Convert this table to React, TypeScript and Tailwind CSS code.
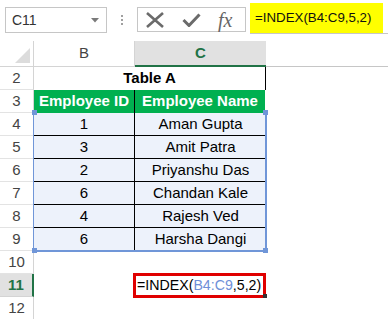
const people = [
  { id: 1, name: "Aman Gupta" },
  { id: 3, name: "Amit Patra" },
  { id: 2, name: "Priyanshu Das" },
  { id: 6, name: "Chandan Kale" },
  { id: 4, name: "Rajesh Ved" },
  { id: 6, name: "Harsha Dangi" },
];

function RowNum({ n, active }: { n: number; active?: boolean }) {
  if (active) {
    return (
      <div className="flex h-full w-[34px] shrink-0 items-center justify-center border-r-2 border-b border-r-[#217346] border-b-[#d4d4d4] bg-[#e1e1e1] text-[15px] font-bold text-[#217346]">
        {n}
      </div>
    );
  }
  return (
    <div className="flex h-full w-[34px] shrink-0 items-center justify-center border-r border-b border-r-[#d4d4d4] border-b-[#e3e3e3] text-[15px] text-[#444]">
      {n}
    </div>
  );
}

export default function App() {
  return (
    <div className="h-[319px] w-[388px] overflow-hidden bg-white font-['Liberation_Sans',Arial,sans-serif] text-black">
      {/* formula bar */}
      <div className="flex h-[41px] items-start">
        <div className="ml-[5px] mt-[7px] flex h-[26px] w-[102px] items-center justify-between border border-[#c6c6c6] pl-[6px] pr-[7px]">
          <span className="text-[14px] text-[#333]">C11</span>
          <svg width="8" height="5" viewBox="0 0 8 5">
            <path d="M0 0h8L4 4.5z" fill="#7a7a7a" />
          </svg>
        </div>
        <div className="ml-[14px] mt-[15px] flex flex-col gap-[2px]">
          <span className="h-[2px] w-[2px] bg-[#a0a0a0]" />
          <span className="h-[2px] w-[2px] bg-[#a0a0a0]" />
          <span className="h-[2px] w-[2px] bg-[#a0a0a0]" />
        </div>
        <div className="ml-[14px] mt-[7px] flex h-[25px] w-[109px] items-center border border-[#c6c6c6]">
          <svg className="ml-[7px]" width="20" height="16" viewBox="0 0 20 16">
            <path d="M2 1l16 14M18 1L2 15" stroke="#6b6b6b" strokeWidth="2.6" />
          </svg>
          <svg className="ml-[17px]" width="19" height="14" viewBox="0 0 19 14">
            <path d="M1.5 7l5.5 5.5L17.5 1.5" stroke="#6b6b6b" strokeWidth="3" fill="none" />
          </svg>
          <span className="ml-[17px] font-['Liberation_Serif',serif] text-[20px] italic leading-none text-[#666]">
            fx
          </span>
        </div>
        <div className="ml-[4px] mt-[3px] h-[31px] flex-1 border-b border-[#c6c6c6]">
          <div className="flex h-[30px] w-[133px] items-center bg-[#ffff00] pl-[5px] text-[13.3px] text-[#111]">
            =INDEX(B4:C9,5,2)
          </div>
        </div>
      </div>

      {/* column headers */}
      <div className="flex h-[26px]">
        <div className="flex w-[34px] shrink-0 items-end justify-end border-r border-b border-[#d4d4d4] pr-[3px] pb-[3px]">
          <svg width="15" height="15" viewBox="0 0 15 15">
            <path d="M15 0V15H0z" fill="#dcdcdc" />
          </svg>
        </div>
        <div className="flex w-[101px] shrink-0 items-center justify-center border-r border-b border-[#d4d4d4] text-[15px] text-[#444]">
          B
        </div>
        <div className="flex w-[131px] shrink-0 items-center justify-center border-b-2 border-[#217346] bg-[#e1e1e1] text-[15px] font-bold text-[#217346]">
          C
        </div>
        <div className="flex-1 border-b border-[#c6c6c6]" />
      </div>

      {/* row 2 */}
      <div className="flex h-[23px]">
        <RowNum n={2} />
        <div className="flex w-[232px] shrink-0 items-center justify-center border-r border-black text-[15px] font-bold">
          Table A
        </div>
      </div>

      {/* row 3 */}
      <div className="flex h-[23px]">
        <RowNum n={3} />
        <div className="flex w-[101px] shrink-0 items-center justify-center border-r border-black bg-[#00b050] text-[15px] font-bold text-white">
          Employee ID
        </div>
        <div className="flex w-[130px] shrink-0 items-center justify-center bg-[#00b050] text-[15px] font-bold text-white">
          Employee Name
        </div>
      </div>

      {/* rows 4-9 */}
      <div className="relative">
        {people.map((p, i) => (
          <div key={i} className="flex h-[23px]">
            <RowNum n={i + 4} />
            <div className="flex w-[101px] shrink-0 items-center justify-center border-r border-b border-black bg-[#edf2fb] text-[15px]">
              {p.id}
            </div>
            <div className="flex w-[131px] shrink-0 items-center justify-center border-b border-black bg-[#edf2fb] text-[15px]">
              {p.name}
            </div>
          </div>
        ))}
        <div className="pointer-events-none absolute left-[33px] top-[-1px] h-[140px] w-[234px] border-l border-r-2 border-b-2 border-[#7096d8]" />
        <div className="absolute left-[32px] top-[-3px] h-[5px] w-[5px] bg-[#7096d8]" />
        <div className="absolute left-[263px] top-[-3px] h-[5px] w-[5px] bg-[#7096d8]" />
        <div className="absolute left-[32px] top-[135px] h-[5px] w-[5px] bg-[#7096d8]" />
        <div className="absolute left-[263px] top-[135px] h-[5px] w-[5px] bg-[#7096d8]" />
      </div>

      {/* row 10 */}
      <div className="flex h-[23px]">
        <RowNum n={10} />
      </div>

      {/* row 11 */}
      <div className="flex h-[23px]">
        <RowNum n={11} active />
        <div className="w-[100px] shrink-0" />
        <div className="relative flex w-[131px] shrink-0 items-center pl-[3px] text-[14.2px]">
          <span>
            =INDEX(<span className="text-[#6f8fd8]">B4:C9</span>,5,2)
          </span>
          <div className="absolute -left-[1px] -top-[1px] h-[25px] w-[133px] border-[3px] border-[#e00000]" />
          <div className="absolute left-[129px] top-[20px] h-[4px] w-[4px] bg-[#333]" />
        </div>
      </div>

      {/* row 12 */}
      <div className="flex h-[23px]">
        <RowNum n={12} />
      </div>
    </div>
  );
}
